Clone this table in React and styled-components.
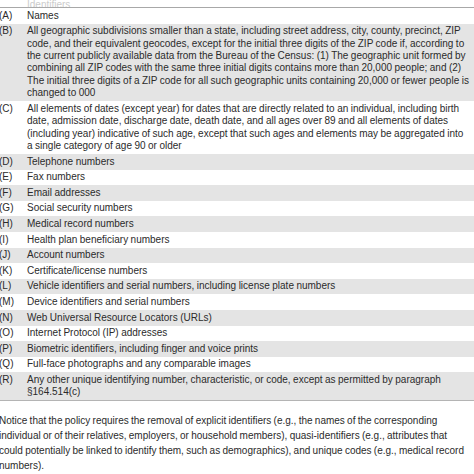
import React from 'react';
import styled, { createGlobalStyle } from 'styled-components';

const GlobalStyle = createGlobalStyle`
  html, body {
    margin: 0;
    padding: 0;
    background: #ffffff;
  }
  body {
    font-family: "Liberation Sans", Arial, Helvetica, sans-serif;
    color: #2b2b2b;
    overflow: hidden;
  }
`;

const Page = styled.div`
  width: 477px;
  margin-left: -2px;
  font-size: 10px;
`;

const HeaderStrip = styled.div`
  height: 7px;
  overflow: hidden;
  display: flex;
  align-items: flex-end;
  padding-left: 29px;
  color: #cccccc;
  line-height: 12px;
  border-bottom: 1px solid #a8a8a8;
`;

const HeaderText = styled.span`
  display: block;
  margin-bottom: -4px;
`;

const Table = styled.div`
  display: flex;
  flex-direction: column;
  border-bottom: 1px solid #b4b4b4;
`;

const Row = styled.div`
  display: grid;
  grid-template-columns: 29px 1fr;
  padding: 1.6px 0;
  line-height: 12.4px;
  background: ${p => (p.$shaded ? '#e4e4e4' : '#ffffff')};
`;

const Label = styled.div`
  padding-left: 1px;
`;

const Text = styled.div`
  padding-right: 3.5px;
  word-spacing: -0.3px;
`;

const Notice = styled.p`
  margin: 0;
  padding: 11.5px 0 1.5px 1px;
  line-height: 15px;
  word-spacing: -0.5px;
  border-bottom: 1px solid #b0b0b0;
`;

const rows = [
  ['A', 'Names'],
  [
    'B',
    'All geographic subdivisions smaller than a state, including street address, city, county, precinct, ZIP code, and their equivalent geocodes, except for the initial three digits of the ZIP code if, according to the current publicly available data from the Bureau of the Census: (1) The geographic unit formed by combining all ZIP codes with the same three initial digits contains more than 20,000 people; and (2) The initial three digits of a ZIP code for all such geographic units containing 20,000 or fewer people is changed to 000',
  ],
  [
    'C',
    'All elements of dates (except year) for dates that are directly related to an individual, including birth date, admission date, discharge date, death date, and all ages over 89 and all elements of dates (including year) indicative of such age, except that such ages and elements may be aggregated into a\u00a0single category of age 90 or older',
  ],
  ['D', 'Telephone numbers'],
  ['E', 'Fax numbers'],
  ['F', 'Email addresses'],
  ['G', 'Social security numbers'],
  ['H', 'Medical record numbers'],
  ['I', 'Health plan beneficiary numbers'],
  ['J', 'Account numbers'],
  ['K', 'Certificate/license numbers'],
  ['L', 'Vehicle identifiers and serial numbers, including license plate numbers'],
  ['M', 'Device identifiers and serial numbers'],
  ['N', 'Web Universal Resource Locators (URLs)'],
  ['O', 'Internet Protocol (IP) addresses'],
  ['P', 'Biometric identifiers, including finger and voice prints'],
  ['Q', 'Full-face photographs and any comparable images'],
  [
    'R',
    'Any other unique identifying number, characteristic, or code, except as permitted by paragraph §164.514(c)',
  ],
];

const App = () => (
  <>
    <GlobalStyle />
    <Page>
      <HeaderStrip>
        <HeaderText>Identifiers</HeaderText>
      </HeaderStrip>
      <Table>
        {rows.map(([key, text], i) => (
          <Row key={key} $shaded={i % 2 === 1}>
            <Label>({key})</Label>
            <Text>{text}</Text>
          </Row>
        ))}
      </Table>
      <Notice>
        Notice that the policy requires the removal of explicit identifiers (e.g., the names of the
        corresponding individual or of their relatives, employers, or household members),
        quasi-identifiers (e.g., attributes that
        <br />
        could potentially be linked to identify them, such as demographics), and unique codes
        (e.g., medical record numbers).
      </Notice>
    </Page>
  </>
);

export default App;
